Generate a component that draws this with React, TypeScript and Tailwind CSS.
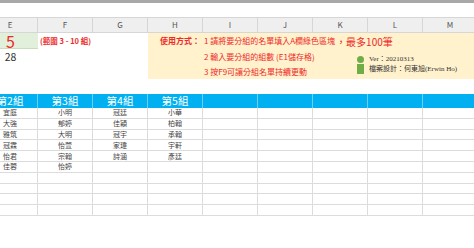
import React from 'react';

const cols = ['E', 'F', 'G', 'H', 'I', 'J', 'K', 'L', 'M'];

const groups = [
  ['宜庭', '大強', '雅筑', '冠霖', '怡君', '佳蓉'],
  ['小明', '郁婷', '大明', '怡萱', '宗翰', '怡婷'],
  ['冠廷', '佳穎', '冠宇', '家瑋', '詩涵'],
  ['小華', '柏翰', '承翰', '宇軒', '彥廷'],
];

const headers = ['第2組', '第3組', '第4組', '第5組', '', '', '', '', ''];

export default function App() {
  const rows = Array.from({ length: 10 }, (_, r) => cols.map((_, c) => groups[c]?.[r] ?? ''));

  return (
    <div className="w-[474px] h-[248px] overflow-hidden bg-white font-['Noto_Sans_CJK_TC','Noto_Sans',sans-serif] text-[#333]">
      <div className="h-[3px] bg-[#a8a8a8]" />
      <div className="h-[14px]" />

      <div className="-ml-[17px] w-[495px] flex flex-col">
        {/* column letters */}
        <div className="flex h-[16px] bg-[#efefef] border-t border-b border-[#d6d6d6]">
          {cols.map((c) => (
            <div key={c} className="w-[55px] shrink-0 border-r border-[#d6d6d6] flex items-center justify-center text-[8px] text-[#555]">
              {c}
            </div>
          ))}
        </div>

        {/* top block */}
        <div className="flex h-[61px]">
          <div className="w-[165px] shrink-0 flex flex-col">
            <div className="flex h-[16px]">
              <div className="w-[55px] shrink-0 bg-[#e2efda] border-b border-[#c9dcbc] flex items-center justify-center text-[16px] leading-none text-[#ee2a2a]">
                5
              </div>
              <div className="pl-[2px] flex items-center text-[7.5px] font-bold text-[#ee2a2a] whitespace-nowrap">
                (範圍 3 - 10 組)
              </div>
            </div>
            <div className="flex h-[16px]">
              <div className="w-[55px] shrink-0 flex items-center justify-center text-[10.5px] leading-none text-[#333]">28</div>
            </div>
          </div>

          <div className="flex-1 h-[46px] bg-[#fff2cc] flex text-[#ee2a2a]">
            <div className="w-[55px] shrink-0 h-[16px] flex items-center justify-end pr-[3px] text-[8px] font-bold whitespace-nowrap">
              使用方式：
            </div>
            <div className="flex-1 flex flex-col">
              <div className="h-[16px] pl-[1px] flex items-center text-[8px] whitespace-nowrap">
                1 請將要分組的名單填入A欄綠色區塊
                <span className="text-[10px] ml-[1px]">，最多100筆</span>
              </div>
              <div className="flex">
                <div className="w-[154px] shrink-0 flex flex-col text-[8px]">
                  <div className="h-[16px] pl-[1px] flex items-center whitespace-nowrap">2 輸入要分組的組數 (E1儲存格)</div>
                  <div className="h-[14px] pl-[1px] flex items-center whitespace-nowrap">3 按F9可讓分組名單持續更動</div>
                </div>
                <div className="pt-[5px] flex flex-col font-['Liberation_Serif','Noto_Sans_CJK_TC',serif] text-[7px] text-[#333]">
                  <div className="h-[10px] flex items-center gap-[5px] whitespace-nowrap">
                    <span className="w-[7px] h-[7px] rounded-full bg-[#70ad47]" />
                    Ver：20210313
                  </div>
                  <div className="h-[10px] flex items-center gap-[5px] whitespace-nowrap">
                    <span className="w-[7px] h-[10px] bg-[#70ad47]" />
                    檔案設計：何東旭(Erwin Ho)
                  </div>
                </div>
              </div>
            </div>
          </div>
        </div>

        {/* group table */}
        <div className="flex h-[14px] bg-[#00b0f0]">
          {headers.map((h, i) => (
            <div key={i} className="w-[55px] shrink-0 border-r border-[#6fcdf3] flex items-center justify-center text-[10.5px] text-white">
              {h}
            </div>
          ))}
        </div>
        {rows.map((row, r) => (
          <div key={r} className="flex h-[10.8px] border-b border-[#dcdcdc]">
            {row.map((name, c) => (
              <div key={c} className="w-[55px] shrink-0 border-r border-[#dcdcdc] flex items-center justify-center text-[7px] leading-none text-[#444]">
                {name}
              </div>
            ))}
          </div>
        ))}
      </div>
    </div>
  );
}
